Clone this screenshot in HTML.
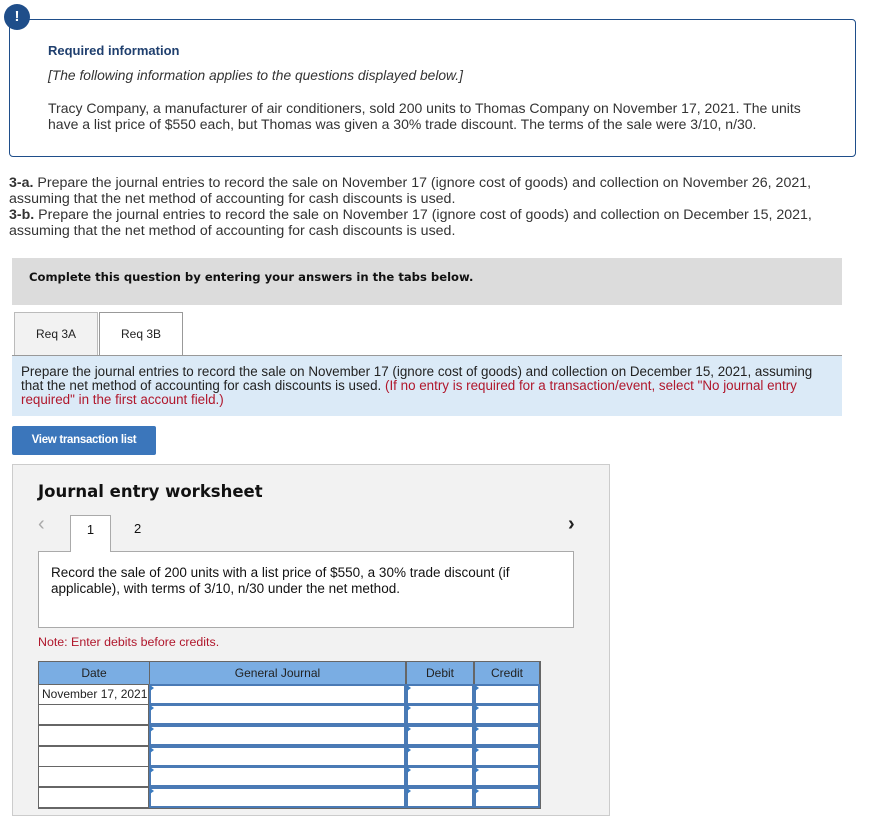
<!DOCTYPE html>
<html><head><style>
*{margin:0;padding:0;box-sizing:border-box}
body{width:894px;height:823px;background:#fff;font-family:"Liberation Sans",sans-serif;position:relative;overflow:hidden;color:#333}
.a{position:absolute;white-space:nowrap}
.cell{position:absolute;background:#fff}
.mk{position:absolute;width:0;height:0;border-top:3px solid transparent;border-bottom:3px solid transparent;border-left:4px solid #3b7bbf}
</style></head><body>
<div class="a" style="left:9px;top:19px;width:847px;height:138px;border:1px solid #1f4e8a;border-radius:4px"></div>
<div class="a" style="left:4px;top:4px;width:26px;height:26px;border-radius:50%;background:#1f4e8a;color:#fff;font-weight:bold;font-size:15px;text-align:center;line-height:26px">!</div>
<div class="a" style="left:48px;top:43px;font-size:13px;font-weight:bold;color:#1f3f6e">Required information</div>
<div class="a" style="left:48px;top:68px;font-size:13.8px;font-style:italic;color:#333">[The following information applies to the questions displayed below.]</div>
<div class="a" style="left:48px;top:100px;font-size:14px;line-height:16px;color:#333">Tracy Company, a manufacturer of air conditioners, sold 200 units to Thomas Company on November 17, 2021. The units<br>have a list price of $550 each, but Thomas was given a 30% trade discount. The terms of the sale were 3/10, n/30.</div>

<div class="a" style="left:9px;top:175px;font-size:14.2px;line-height:16px;color:#333"><b>3-a.</b> Prepare the journal entries to record the sale on November 17 (ignore cost of goods) and collection on November 26, 2021,<br>assuming that the net method of accounting for cash discounts is used.<br><b>3-b.</b> Prepare the journal entries to record the sale on November 17 (ignore cost of goods) and collection on December 15, 2021,<br>assuming that the net method of accounting for cash discounts is used.</div>

<div class="a" style="left:12px;top:258px;width:830px;height:47px;background:#dcdcdc"></div>
<div class="a" style="left:29px;top:270px;font-family:'DejaVu Sans',sans-serif;font-size:11.6px;font-weight:bold;color:#111">Complete this question by entering your answers in the tabs below.</div>

<div class="a" style="left:14px;top:312px;width:84px;height:43px;background:#f2f2f2;border:1px solid #bbb;border-bottom:none;font-size:12px;color:#222;text-align:center;line-height:42px">Req 3A</div>
<div class="a" style="left:99px;top:312px;width:84px;height:44px;background:#fff;border:1px solid #999;border-bottom:none;font-size:12px;color:#222;text-align:center;line-height:42px">Req 3B</div>
<div class="a" style="left:12px;top:355px;width:830px;height:1px;background:#999"></div>
<div class="a" style="left:12px;top:356px;width:830px;height:60px;background:#dbeaf7"></div>
<div class="a" style="left:21px;top:365px;font-size:13.4px;line-height:14px;color:#222">Prepare the journal entries to record the sale on November 17 (ignore cost of goods) and collection on December 15, 2021, assuming<br>that the net method of accounting for cash discounts is used. <span style="color:#b0172c">(If no entry is required for a transaction/event, select "No journal entry</span><br><span style="color:#b0172c">required" in the first account field.)</span></div>

<div class="a" style="left:12px;top:426px;width:144px;height:29px;background:#3b76bb;border-radius:2px;color:#fff;font-weight:bold;font-size:11.5px;text-align:center;line-height:29px;letter-spacing:-0.3px">View transaction list</div>

<div class="a" style="left:12px;top:464px;width:598px;height:352px;background:#f2f2f2;border:1px solid #ccc"></div>
<div class="a" style="left:38px;top:482px;font-family:'DejaVu Sans',sans-serif;font-size:16.5px;font-weight:bold;color:#111">Journal entry worksheet</div>
<div class="a" style="left:38px;top:513px;font-size:20px;color:#aaa">&lsaquo;</div>
<div class="a" style="left:568px;top:513px;font-size:20px;color:#222;font-weight:bold">&rsaquo;</div>
<div class="a" style="left:70px;top:515px;width:41px;height:37px;background:#fff;border:1px solid #aaa;border-bottom:none;z-index:2;text-align:center;font-size:13px;line-height:28px;color:#111">1</div>
<div class="a" style="left:134px;top:521px;font-size:13px;color:#111">2</div>
<div class="a" style="left:38px;top:551px;width:536px;height:77px;background:#fff;border:1px solid #aaa"></div>
<div class="a" style="left:51px;top:565px;font-size:13.5px;line-height:16px;color:#111">Record the sale of 200 units with a list price of $550, a 30% trade discount (if<br>applicable), with terms of 3/10, n/30 under the net method.</div>
<div class="a" style="left:38px;top:635px;font-size:12.4px;color:#b0172c">Note: Enter debits before credits.</div>

<div class="a" style="left:38px;top:661px;width:503px;height:148px;background:#666"></div>
<div class="a" style="left:39px;top:662px;width:110px;height:22px;background:#7aade3;font-size:12px;color:#222;text-align:center;line-height:22px">Date</div>
<div class="a" style="left:150px;top:662px;width:255px;height:22px;background:#7aade3;font-size:12px;color:#222;text-align:center;line-height:22px">General Journal</div>
<div class="a" style="left:407px;top:662px;width:66px;height:22px;background:#7aade3;font-size:12px;color:#222;text-align:center;line-height:22px">Debit</div>
<div class="a" style="left:475px;top:662px;width:64px;height:22px;background:#7aade3;font-size:12px;color:#222;text-align:center;line-height:22px">Credit</div>
<div id="rows"></div>
<script>
var t=[685,705,726,747,767,788],h='';
for(var i=0;i<6;i++){var y=t[i];
h+='<div class="cell" style="left:39px;top:'+y+'px;width:109px;height:19px;font-size:12px;color:#222;line-height:19px;padding-left:3px">'+(i==0?'November 17, 2021':'')+'</div>';
h+='<div class="cell" style="left:149px;top:'+(y-1)+'px;width:257px;height:21px;border:2px solid #4a7ab5"></div><div class="mk" style="left:150px;top:'+y+'px"></div>';
h+='<div class="cell" style="left:406px;top:'+(y-1)+'px;width:68px;height:21px;border:2px solid #4a7ab5"></div><div class="mk" style="left:407px;top:'+y+'px"></div>';
h+='<div class="cell" style="left:474px;top:'+(y-1)+'px;width:66px;height:21px;border:2px solid #4a7ab5"></div><div class="mk" style="left:475px;top:'+y+'px"></div>';}
document.getElementById('rows').innerHTML=h;
</script>
</body></html>
